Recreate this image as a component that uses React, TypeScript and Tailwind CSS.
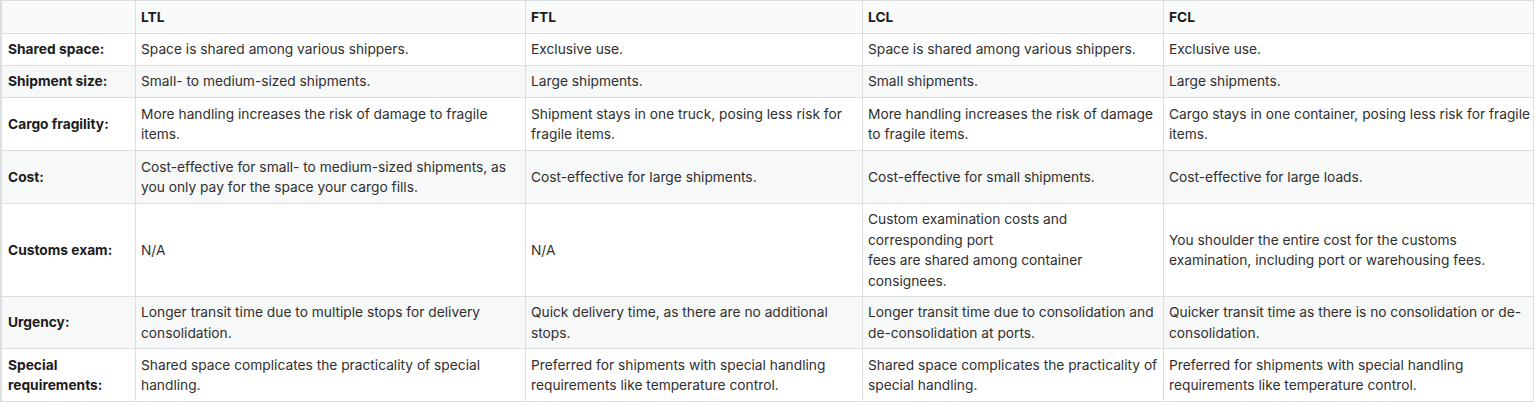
import React from "react";

const cols = ["LTL", "FTL", "LCL", "FCL"];
const widths = ["w-[390px]", "w-[337px]", "w-[301px]", "w-[370px]"];

const rows: { label: React.ReactNode; h: string; cells: React.ReactNode[] }[] = [
  {
    label: "Shared space:",
    h: "h-[32px]",
    cells: [
      "Space is shared among various shippers.",
      "Exclusive use.",
      "Space is shared among various shippers.",
      "Exclusive use.",
    ],
  },
  {
    label: "Shipment size:",
    h: "h-[32px]",
    cells: ["Small- to medium-sized shipments.", "Large shipments.", "Small shipments.", "Large shipments."],
  },
  {
    label: "Cargo fragility:",
    h: "h-[53px]",
    cells: [
      "More handling increases the risk of damage to fragile items.",
      "Shipment stays in one truck, posing less risk for fragile items.",
      "More handling increases the risk of damage to fragile items.",
      "Cargo stays in one container, posing less risk for fragile items.",
    ],
  },
  {
    label: "Cost:",
    h: "h-[53px]",
    cells: [
      "Cost-effective for small- to medium-sized shipments, as you only pay for the space your cargo fills.",
      "Cost-effective for large shipments.",
      "Cost-effective for small shipments.",
      "Cost-effective for large loads.",
    ],
  },
  {
    label: "Customs exam:",
    h: "h-[93px]",
    cells: [
      "N/A",
      "N/A",
      <>
        Custom examination costs and
        <br />
        corresponding port
        <br />
        fees are shared among container consignees.
      </>,
      "You shoulder the entire cost for the customs examination, including port or warehousing fees.",
    ],
  },
  {
    label: "Urgency:",
    h: "h-[52px]",
    cells: [
      "Longer transit time due to multiple stops for delivery consolidation.",
      "Quick delivery time, as there are no additional stops.",
      "Longer transit time due to consolidation and de-consolidation at ports.",
      "Quicker transit time as there is no consolidation or de-consolidation.",
    ],
  },
  {
    label: (
      <>
        Special
        <br />
        requirements:
      </>
    ),
    h: "h-[53px]",
    cells: [
      "Shared space complicates the practicality of special handling.",
      "Preferred for shipments with special handling requirements like temperature control.",
      "Shared space complicates the practicality of special handling.",
      "Preferred for shipments with special handling requirements like temperature control.",
    ],
  },
];

export default function App() {
  return (
    <div className="w-[1536px] h-[404px] bg-white" style={{ fontFamily: "Inter, 'Noto Sans', sans-serif" }}>
      <div className="w-[1534px] border-l-2 border-t border-[#dcdfe2]">
        <table className="table-fixed border-separate border-spacing-0 w-[1532px] text-[13.75px] leading-[20.5px] text-[#303030]">
          <thead>
            <tr className="bg-[#f9fafa] h-[33px]">
              <th className="w-[134px] border-r border-b border-[#dcdfe2] px-[6px] py-[5px]"></th>
              {cols.map((c, j) => (
                <th
                  key={c}
                  className={`${widths[j]} border-r border-b border-[#dcdfe2] pl-[5px] pr-[2px] py-[5px] text-left font-bold text-[#1c1c1c]`}
                >
                  {c}
                </th>
              ))}
            </tr>
          </thead>
          <tbody>
            {rows.map((r, i) => (
              <tr key={i} className={`${r.h} ${i % 2 === 1 ? "bg-[#f7f8f8]" : "bg-white"}`}>
                <td className="border-r border-b border-[#dcdfe2] px-[6px] py-[5px] font-bold text-[#1c1c1c] align-middle">
                  {r.label}
                </td>
                {r.cells.map((c, j) => (
                  <td key={j} className="border-r border-b border-[#dcdfe2] pl-[5px] pr-[2px] py-[5px] align-middle">
                    {c}
                  </td>
                ))}
              </tr>
            ))}
          </tbody>
        </table>
      </div>
    </div>
  );
}
